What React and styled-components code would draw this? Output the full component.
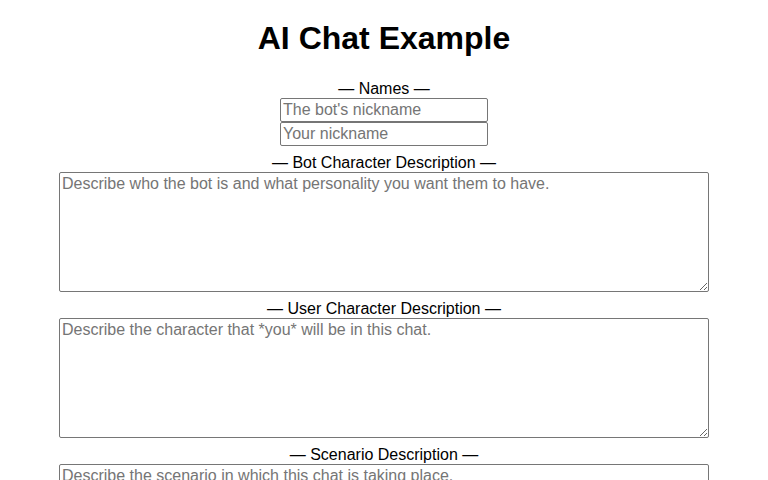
import React from "react";
import styled, { createGlobalStyle } from "styled-components";

const GlobalStyle = createGlobalStyle`
  body {
    margin: 0;
    background: #ffffff;
    color: #000000;
    font-family: "Liberation Sans", Arial, sans-serif;
  }
`;

const Page = styled.div`
  display: flex;
  flex-direction: column;
  align-items: center;
  padding-top: 20px;
`;

const Title = styled.h1`
  margin: 0;
  font-size: 32px;
  line-height: 37px;
  font-weight: bold;
`;

const Label = styled.div`
  margin-top: ${(p) => p.gap || 7}px;
  font-size: 16px;
  line-height: 19px;
  text-align: center;
`;

const TextInput = styled.input`
  box-sizing: border-box;
  width: 208px;
  height: 24px;
  margin: 0;
  padding: 1px 2px;
  border: 1px solid #767676;
  border-radius: 2px;
  font-family: "Liberation Sans", Arial, sans-serif;
  font-size: 16px;
  color: #000;
  &::placeholder {
    color: #757575;
  }
`;

const TextArea = styled.textarea`
  box-sizing: border-box;
  width: 650px;
  height: 120px;
  margin: 0;
  padding: 2px;
  border: 1px solid #767676;
  border-radius: 2px;
  font-family: "Liberation Sans", Arial, sans-serif;
  font-size: 16px;
  line-height: 18px;
  flex-shrink: 0;
  &::placeholder {
    color: #757575;
  }
`;

export default function App() {
  return (
    <>
      <GlobalStyle />
      <Page>
        <Title>AI Chat Example</Title>
        <Label gap={22}>— Names —</Label>
        <TextInput placeholder="The bot's nickname" />
        <TextInput placeholder="Your nickname" />
        <Label>— Bot Character Description —</Label>
        <TextArea placeholder="Describe who the bot is and what personality you want them to have." />
        <Label>— User Character Description —</Label>
        <TextArea placeholder="Describe the character that *you* will be in this chat." />
        <Label>— Scenario Description —</Label>
        <TextArea placeholder="Describe the scenario in which this chat is taking place." />
      </Page>
    </>
  );
}
